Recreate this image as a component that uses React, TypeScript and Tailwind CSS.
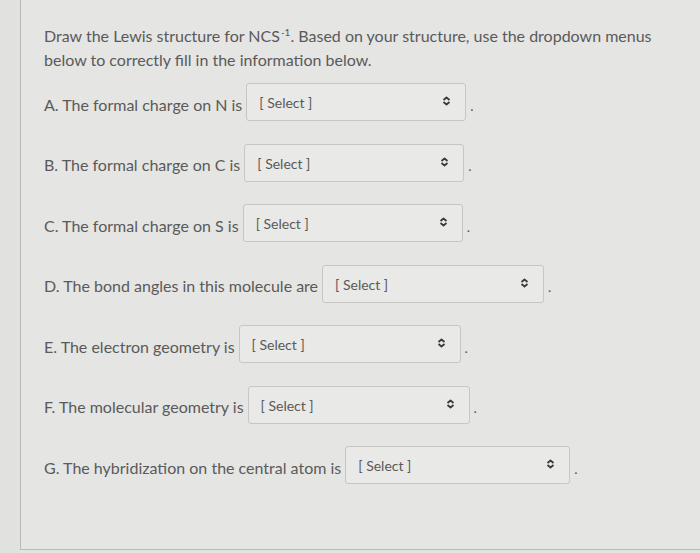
import React from 'react';

const rows = [
  { label: 'A. The formal charge on N is', w: 'w-[220px]' },
  { label: 'B. The formal charge on C is', w: 'w-[220px]' },
  { label: 'C. The formal charge on S is', w: 'w-[220px]' },
  { label: 'D. The bond angles in this molecule are', w: 'w-[222px]' },
  { label: 'E. The electron geometry is', w: 'w-[222px]' },
  { label: 'F. The molecular geometry is', w: 'w-[222px]' },
  { label: 'G. The hybridization on the central atom is', w: 'w-[225px]' },
];

function Chevron() {
  return (
    <svg width="9" height="10" viewBox="0 0 9 10" fill="none">
      <path d="M1.5 4 L4.5 1.5 L7.5 4" stroke="#3a3a3a" strokeWidth="1.8" strokeLinejoin="round" />
      <path d="M1.5 6 L4.5 8.5 L7.5 6" stroke="#3a3a3a" strokeWidth="1.8" strokeLinejoin="round" />
    </svg>
  );
}

function Dropdown({ w }: { w: string }) {
  return (
    <div className={`${w} h-[38px] flex items-start justify-between pl-[12px] pr-[14px] pt-[8px] border border-[#c6c6c4] rounded-[3px] bg-[#e9e9e7]`}>
      <span className="text-[14px] text-[#5a5a5a]">[ Select ]</span>
      <span className="pt-[4px]"><Chevron /></span>
    </div>
  );
}

export default function App() {
  return (
    <div className="w-[700px] h-[553px] bg-[#e3e3e1] flex font-['Lato','Liberation_Sans',sans-serif] text-[#5a5a5a] overflow-hidden">
      <div className="w-[20px] shrink-0 bg-[#e1e1df]" />
      <div className="flex-1 h-[550px] border-l border-b border-[#b9b9b7] bg-[#e5e5e3] pl-[23px] pt-[24px]">
        <div className="text-[16px] leading-[24px]">
          <div className="flex items-start whitespace-nowrap">
            <span>Draw the Lewis structure for NCS</span>
            <span className="ml-[1px] text-[10px] leading-[16px]">-1</span>
            <span>. Based on your structure, use the dropdown menus</span>
          </div>
          <div>below to correctly fill in the information below.</div>
        </div>
        <div className="mt-[11px] flex flex-col gap-[22.5px]">
          {rows.map((r) => (
            <div key={r.label} className="flex items-center">
              <span className="text-[16px] pt-[5px] mr-[4px]">{r.label}</span>
              <Dropdown w={r.w} />
              <span className="ml-[4px] pt-[6px] text-[14px]">.</span>
            </div>
          ))}
        </div>
      </div>
    </div>
  );
}
